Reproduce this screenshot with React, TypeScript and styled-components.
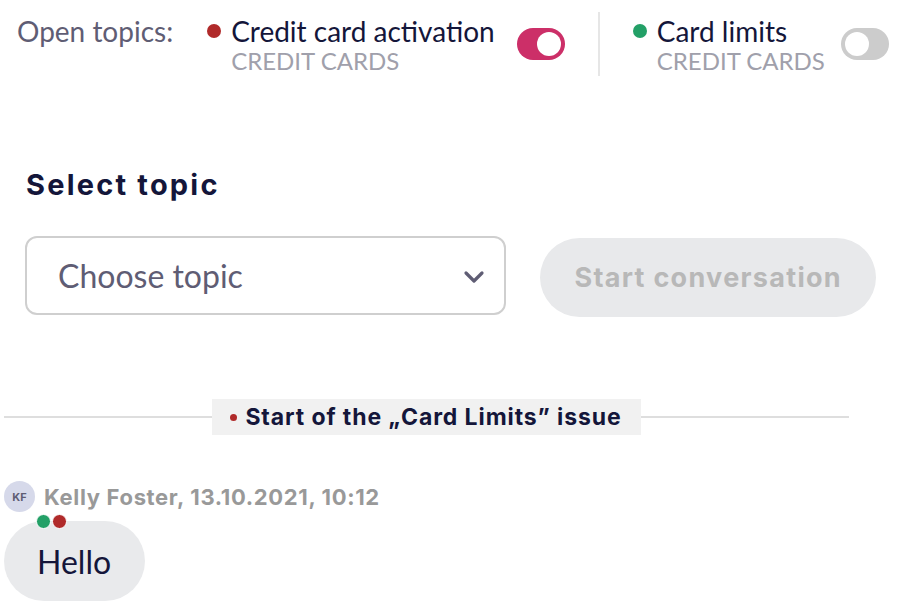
import React, { useState } from "react";
import styled, { createGlobalStyle } from "styled-components";

const GlobalStyle = createGlobalStyle`
  html, body {
    margin: 0;
    padding: 0;
    background: #ffffff;
  }
  body {
    font-family: "Lato", "Noto Sans", sans-serif;
    color: #14163a;
  }
  * {
    box-sizing: border-box;
  }
`;

const topics = [
  { title: "Credit card activation", category: "CREDIT CARDS", color: "#b02a2a", on: true },
  { title: "Card limits", category: "CREDIT CARDS", color: "#23a067", on: false },
];

export default function App() {
  const [states, setStates] = useState(topics.map((t) => t.on));

  return (
    <Page>
      <GlobalStyle />
      <TopicsBar>
        <OpenLabel>Open topics:</OpenLabel>
        {topics.map((topic, i) => (
          <React.Fragment key={topic.title}>
            {i > 0 && <VDivider />}
            <TopicItem>
              <Dot color={topic.color} />
              <TopicText>
                <TopicTitle>{topic.title}</TopicTitle>
                <TopicCategory>{topic.category}</TopicCategory>
              </TopicText>
              <Toggle
                on={states[i]}
                onClick={() =>
                  setStates(states.map((s, j) => (j === i ? !s : s)))
                }
              >
                <Knob />
              </Toggle>
            </TopicItem>
          </React.Fragment>
        ))}
      </TopicsBar>

      <SelectSection>
        <Heading>Select topic</Heading>
        <SelectRow>
          <SelectBox>
            <span>Choose topic</span>
            <svg width="22" height="14" viewBox="0 0 22 14">
              <path
                d="M3 3 L11 11 L19 3"
                fill="none"
                stroke="#5f5d74"
                strokeWidth="3.2"
                strokeLinecap="round"
                strokeLinejoin="round"
              />
            </svg>
          </SelectBox>
          <StartButton disabled>Start conversation</StartButton>
        </SelectRow>
      </SelectSection>

      <IssueDivider>
        <IssueLabel>
          <SmallDot />
          Start of the „Card Limits” issue
        </IssueLabel>
      </IssueDivider>

      <Message>
        <MessageHeader>
          <Avatar>KF</Avatar>
          <Author>Kelly Foster, 13.10.2021, 10:12</Author>
        </MessageHeader>
        <BubbleWrap>
          <BubbleDots>
            <Dot color="#23a067" small />
            <Dot color="#b02a2a" small />
          </BubbleDots>
          <Bubble>Hello</Bubble>
        </BubbleWrap>
      </Message>
    </Page>
  );
}

const Page = styled.div`
  width: 903px;
  height: 602px;
  overflow: hidden;
  display: flex;
  flex-direction: column;
`;

const TopicsBar = styled.div`
  display: flex;
  align-items: stretch;
  padding: 12px 0 0 17px;
  height: 76px;
`;

const OpenLabel = styled.div`
  font-size: 28px;
  line-height: 32px;
  color: #5f5d74;
  padding-top: 3px;
  margin-right: 34px;
`;

const TopicItem = styled.div`
  display: flex;
  align-items: flex-start;
  padding-top: 3px;
`;

const Dot = styled.span<{ color: string; small?: boolean }>`
  width: ${(p) => (p.small ? 15 : 14)}px;
  height: ${(p) => (p.small ? 15 : 14)}px;
  border-radius: 50%;
  background: ${(p) => p.color};
  flex-shrink: 0;
  margin-top: ${(p) => (p.small ? 0 : 9)}px;
  margin-right: ${(p) => (p.small ? 1 : 10)}px;
  border: ${(p) => (p.small ? "1.5px solid #ffffff" : "none")};
`;

const TopicText = styled.div`
  display: flex;
  flex-direction: column;
`;

const TopicTitle = styled.div`
  font-size: 28px;
  line-height: 32px;
  color: #14163a;
`;

const TopicCategory = styled.div`
  font-size: 24px;
  line-height: 28px;
  color: #a0a0ab;
`;

const Toggle = styled.div<{ on: boolean }>`
  width: 48px;
  height: 32px;
  margin-top: 13px;
  border-radius: 16px;
  background: ${(p) => (p.on ? "#cc2f68" : "#cccccc")};
  margin-left: ${(p) => (p.on ? 22 : 16)}px;
  display: flex;
  align-items: center;
  justify-content: ${(p) => (p.on ? "flex-end" : "flex-start")};
  padding: 0 4px;
  cursor: pointer;
`;

const Knob = styled.span`
  width: 24px;
  height: 24px;
  border-radius: 50%;
  background: #ffffff;
`;

const VDivider = styled.div`
  width: 2px;
  background: #e6e6e6;
  margin: 0 33px 0 33px;
`;

const SelectSection = styled.div`
  padding: 91px 27px 0 25px;
`;

const Heading = styled.h2`
  margin: 0 0 0 1px;
  font-family: "Inter", "Noto Sans", sans-serif;
  font-weight: 700;
  font-size: 29px;
  line-height: 36px;
  letter-spacing: 2.2px;
  color: #14163a;
`;

const SelectRow = styled.div`
  display: flex;
  align-items: flex-start;
  gap: 34px;
  margin-top: 33px;
`;

const SelectBox = styled.div`
  width: 482px;
  height: 79px;
  border: 2px solid #cfcfcf;
  border-radius: 12px;
  display: flex;
  align-items: center;
  justify-content: space-between;
  padding: 0 19px 0 31px;
  font-size: 32px;
  color: #5f5d74;

  svg {
    margin-top: 2px;
  }
`;

const StartButton = styled.button`
  margin-top: 2px;
  width: 336px;
  height: 79px;
  border: none;
  border-radius: 40px;
  background: #e8e9eb;
  color: #b8b8b8;
  font-family: "Inter", "Noto Sans", sans-serif;
  font-weight: 700;
  font-size: 27px;
  letter-spacing: 1.3px;
  padding: 0;
`;

const IssueDivider = styled.div`
  margin: 82px 54px 0 4px;
  display: flex;
  justify-content: center;
  position: relative;

  &::before {
    content: "";
    position: absolute;
    left: 0;
    right: 0;
    top: 17px;
    height: 2px;
    background: #dedede;
  }
`;

const IssueLabel = styled.div`
  position: relative;
  display: flex;
  align-items: center;
  height: 36px;
  padding: 0 19px 0 18px;
  background: #f1f1f1;
  font-family: "Inter", "Noto Sans", sans-serif;
  font-weight: 700;
  font-size: 23px;
  letter-spacing: 0.9px;
  color: #14163a;
`;

const SmallDot = styled.span`
  width: 7px;
  height: 7px;
  border-radius: 50%;
  background: #b02a2a;
  margin-right: 8px;
`;

const Message = styled.div`
  margin-top: 46px;
  padding-left: 4px;
  display: flex;
  flex-direction: column;
`;

const MessageHeader = styled.div`
  display: flex;
  align-items: center;
  gap: 9px;
`;

const Avatar = styled.div`
  width: 31px;
  height: 31px;
  border-radius: 50%;
  background: #d6d9ea;
  color: #5f5d74;
  font-family: "Inter", "Noto Sans", sans-serif;
  font-weight: 700;
  font-size: 11px;
  display: flex;
  align-items: center;
  justify-content: center;
`;

const Author = styled.div`
  font-family: "Inter", "Noto Sans", sans-serif;
  font-weight: 700;
  font-size: 22px;
  letter-spacing: 0.65px;
  color: #999999;
`;

const BubbleWrap = styled.div`
  position: relative;
  margin-top: 9px;
`;

const BubbleDots = styled.div`
  position: absolute;
  top: -7px;
  left: 32px;
  display: flex;
  z-index: 1;
`;

const Bubble = styled.div`
  display: inline-flex;
  align-items: center;
  height: 80px;
  padding: 0 34px 0 33px;
  border-radius: 40px;
  background: #e9eaec;
  font-size: 32px;
  color: #14163a;
`;
